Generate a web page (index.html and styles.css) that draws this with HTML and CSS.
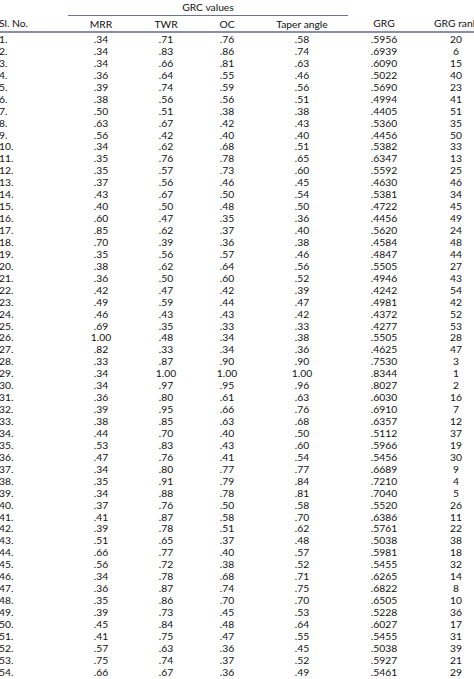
FILE: index.html
```html
<!DOCTYPE html>
<html>
<head>
<meta charset="utf-8">
<link rel="stylesheet" href="styles.css">
</head>
<body>
<table class="grc">
<colgroup>
<col class="c-sl"><col class="c-mrr"><col class="c-twr"><col class="c-oc"><col class="c-tap"><col class="c-grg"><col class="c-rank">
</colgroup>
<thead>
<tr class="h1"><th></th><th colspan="4" class="span">GRC values</th><th></th><th></th></tr>
<tr class="h2"><th class="sl">Sl. No.</th><th>MRR</th><th>TWR</th><th>OC</th><th>Taper angle</th><th>GRG</th><th>GRG rank</th></tr>
</thead>
<tbody>
<tr><td class="sl">1.</td><td>.34</td><td>.71</td><td>.76</td><td>.58</td><td>.5956</td><td>20</td></tr>
<tr><td class="sl">2.</td><td>.34</td><td>.83</td><td>.86</td><td>.74</td><td>.6939</td><td>6</td></tr>
<tr><td class="sl">3.</td><td>.34</td><td>.66</td><td>.81</td><td>.63</td><td>.6090</td><td>15</td></tr>
<tr><td class="sl">4.</td><td>.36</td><td>.64</td><td>.55</td><td>.46</td><td>.5022</td><td>40</td></tr>
<tr><td class="sl">5.</td><td>.39</td><td>.74</td><td>.59</td><td>.56</td><td>.5690</td><td>23</td></tr>
<tr><td class="sl">6.</td><td>.38</td><td>.56</td><td>.56</td><td>.51</td><td>.4994</td><td>41</td></tr>
<tr><td class="sl">7.</td><td>.50</td><td>.51</td><td>.38</td><td>.38</td><td>.4405</td><td>51</td></tr>
<tr><td class="sl">8.</td><td>.63</td><td>.67</td><td>.42</td><td>.43</td><td>.5360</td><td>35</td></tr>
<tr><td class="sl">9.</td><td>.56</td><td>.42</td><td>.40</td><td>.40</td><td>.4456</td><td>50</td></tr>
<tr><td class="sl">10.</td><td>.34</td><td>.62</td><td>.68</td><td>.51</td><td>.5382</td><td>33</td></tr>
<tr><td class="sl">11.</td><td>.35</td><td>.76</td><td>.78</td><td>.65</td><td>.6347</td><td>13</td></tr>
<tr><td class="sl">12.</td><td>.35</td><td>.57</td><td>.73</td><td>.60</td><td>.5592</td><td>25</td></tr>
<tr><td class="sl">13.</td><td>.37</td><td>.56</td><td>.46</td><td>.45</td><td>.4630</td><td>46</td></tr>
<tr><td class="sl">14.</td><td>.43</td><td>.67</td><td>.50</td><td>.54</td><td>.5381</td><td>34</td></tr>
<tr><td class="sl">15.</td><td>.40</td><td>.50</td><td>.48</td><td>.50</td><td>.4722</td><td>45</td></tr>
<tr><td class="sl">16.</td><td>.60</td><td>.47</td><td>.35</td><td>.36</td><td>.4456</td><td>49</td></tr>
<tr><td class="sl">17.</td><td>.85</td><td>.62</td><td>.37</td><td>.40</td><td>.5620</td><td>24</td></tr>
<tr><td class="sl">18.</td><td>.70</td><td>.39</td><td>.36</td><td>.38</td><td>.4584</td><td>48</td></tr>
<tr><td class="sl">19.</td><td>.35</td><td>.56</td><td>.57</td><td>.46</td><td>.4847</td><td>44</td></tr>
<tr><td class="sl">20.</td><td>.38</td><td>.62</td><td>.64</td><td>.56</td><td>.5505</td><td>27</td></tr>
<tr><td class="sl">21.</td><td>.36</td><td>.50</td><td>.60</td><td>.52</td><td>.4946</td><td>43</td></tr>
<tr><td class="sl">22.</td><td>.42</td><td>.47</td><td>.42</td><td>.39</td><td>.4242</td><td>54</td></tr>
<tr><td class="sl">23.</td><td>.49</td><td>.59</td><td>.44</td><td>.47</td><td>.4981</td><td>42</td></tr>
<tr><td class="sl">24.</td><td>.46</td><td>.43</td><td>.43</td><td>.42</td><td>.4372</td><td>52</td></tr>
<tr><td class="sl">25.</td><td>.69</td><td>.35</td><td>.33</td><td>.33</td><td>.4277</td><td>53</td></tr>
<tr><td class="sl">26.</td><td>1.00</td><td>.48</td><td>.34</td><td>.38</td><td>.5505</td><td>28</td></tr>
<tr><td class="sl">27.</td><td>.82</td><td>.33</td><td>.34</td><td>.36</td><td>.4625</td><td>47</td></tr>
<tr><td class="sl">28.</td><td>.33</td><td>.87</td><td>.90</td><td>.90</td><td>.7530</td><td>3</td></tr>
<tr><td class="sl">29.</td><td>.34</td><td>1.00</td><td>1.00</td><td>1.00</td><td>.8344</td><td>1</td></tr>
<tr><td class="sl">30.</td><td>.34</td><td>.97</td><td>.95</td><td>.96</td><td>.8027</td><td>2</td></tr>
<tr><td class="sl">31.</td><td>.36</td><td>.80</td><td>.61</td><td>.63</td><td>.6030</td><td>16</td></tr>
<tr><td class="sl">32.</td><td>.39</td><td>.95</td><td>.66</td><td>.76</td><td>.6910</td><td>7</td></tr>
<tr><td class="sl">33.</td><td>.38</td><td>.85</td><td>.63</td><td>.68</td><td>.6357</td><td>12</td></tr>
<tr><td class="sl">34.</td><td>.44</td><td>.70</td><td>.40</td><td>.50</td><td>.5112</td><td>37</td></tr>
<tr><td class="sl">35.</td><td>.53</td><td>.83</td><td>.43</td><td>.60</td><td>.5966</td><td>19</td></tr>
<tr><td class="sl">36.</td><td>.47</td><td>.76</td><td>.41</td><td>.54</td><td>.5456</td><td>30</td></tr>
<tr><td class="sl">37.</td><td>.34</td><td>.80</td><td>.77</td><td>.77</td><td>.6689</td><td>9</td></tr>
<tr><td class="sl">38.</td><td>.35</td><td>.91</td><td>.79</td><td>.84</td><td>.7210</td><td>4</td></tr>
<tr><td class="sl">39.</td><td>.34</td><td>.88</td><td>.78</td><td>.81</td><td>.7040</td><td>5</td></tr>
<tr><td class="sl">40.</td><td>.37</td><td>.76</td><td>.50</td><td>.58</td><td>.5520</td><td>26</td></tr>
<tr><td class="sl">41.</td><td>.41</td><td>.87</td><td>.58</td><td>.70</td><td>.6386</td><td>11</td></tr>
<tr><td class="sl">42.</td><td>.39</td><td>.78</td><td>.51</td><td>.62</td><td>.5761</td><td>22</td></tr>
<tr><td class="sl">43.</td><td>.51</td><td>.65</td><td>.37</td><td>.48</td><td>.5038</td><td>38</td></tr>
<tr><td class="sl">44.</td><td>.66</td><td>.77</td><td>.40</td><td>.57</td><td>.5981</td><td>18</td></tr>
<tr><td class="sl">45.</td><td>.56</td><td>.72</td><td>.38</td><td>.52</td><td>.5455</td><td>32</td></tr>
<tr><td class="sl">46.</td><td>.34</td><td>.78</td><td>.68</td><td>.71</td><td>.6265</td><td>14</td></tr>
<tr><td class="sl">47.</td><td>.36</td><td>.87</td><td>.74</td><td>.75</td><td>.6822</td><td>8</td></tr>
<tr><td class="sl">48.</td><td>.35</td><td>.86</td><td>.70</td><td>.70</td><td>.6505</td><td>10</td></tr>
<tr><td class="sl">49.</td><td>.39</td><td>.73</td><td>.45</td><td>.53</td><td>.5228</td><td>36</td></tr>
<tr><td class="sl">50.</td><td>.45</td><td>.84</td><td>.48</td><td>.64</td><td>.6027</td><td>17</td></tr>
<tr><td class="sl">51.</td><td>.41</td><td>.75</td><td>.47</td><td>.55</td><td>.5455</td><td>31</td></tr>
<tr><td class="sl">52.</td><td>.57</td><td>.63</td><td>.36</td><td>.45</td><td>.5038</td><td>39</td></tr>
<tr><td class="sl">53.</td><td>.75</td><td>.74</td><td>.37</td><td>.52</td><td>.5927</td><td>21</td></tr>
<tr><td class="sl">54.</td><td>.66</td><td>.67</td><td>.36</td><td>.49</td><td>.5461</td><td>29</td></tr>
</tbody>
</table>
</body>
</html>
```
FILE: styles.css
```css
html, body {
  margin: 0;
  padding: 0;
  background: #ffffff;
  overflow: hidden;
}
body {
  width: 474px;
  height: 679px;
}
.grc {
  margin-left: -1px;
  border-collapse: collapse;
  table-layout: fixed;
  width: 493px;
  font-family: Lato, "Open Sans", sans-serif;
  font-size: 10.3px;
  color: #111111;
}
.c-sl { width: 69px; }
.c-mrr { width: 66px; }
.c-twr { width: 64px; }
.c-oc { width: 58px; }
.c-tap { width: 92px; }
.c-grg { width: 72px; }
.c-rank { width: 72px; }
.grc th, .grc td {
  padding: 0;
  text-align: center;
  font-weight: normal;
  white-space: nowrap;
  overflow: hidden;
}
.grc .sl { text-align: left; }
.h1 th {
  height: 15px;
  line-height: 14px;
  vertical-align: top;
}
.h1 .span {
  border-bottom: 1px solid #6e7393;
}
.h2 th {
  height: 15px;
  line-height: 14px;
  border-bottom: 2px solid #8b8fa6;
}
.grc tbody td {
  height: 11.94px;
  line-height: 11.94px;
}
.grc tbody tr:first-child td {
  padding-top: 1px;
}
```
